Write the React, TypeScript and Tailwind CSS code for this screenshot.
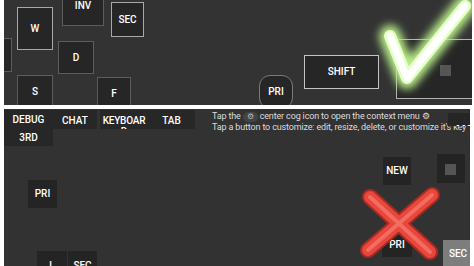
import React from "react";

function Label({ children }: { children: React.ReactNode }) {
  return <span className="text-[10px] font-medium leading-none text-white">{children}</span>;
}

export default function App() {
  return (
    <div className="w-[474px] h-[266px] bg-white flex flex-col gap-[4px] overflow-hidden font-['Roboto','Liberation_Sans',sans-serif]">
      {/* top: edit mode, saved */}
      <div className="relative h-[105px] ml-[4px] mr-[2px] bg-[#333333] overflow-hidden">
        <div className="absolute left-[13px] top-[7px] w-[36px] h-[43px] border border-[#a8a8a8] bg-[#262626] flex items-center justify-center"><Label>W</Label></div>
        <div className="absolute left-[58px] top-[-14px] w-[42px] h-[40px] border border-[#5c5c5c] bg-[#262626] flex items-center justify-center"><Label>INV</Label></div>
        <div className="absolute left-[107px] top-[2px] w-[33px] h-[35px] border border-[#a8a8a8] bg-[#262626] flex items-center justify-center"><Label>SEC</Label></div>
        <div className="absolute left-[-30px] top-[38px] w-[38px] h-[34px] border border-[#5c5c5c] bg-[#262626]" />
        <div className="absolute left-[54px] top-[41px] w-[36px] h-[33px] border border-[#5c5c5c] bg-[#262626] flex items-center justify-center"><Label>D</Label></div>
        <div className="absolute left-[13px] top-[75px] w-[36px] h-[34px] border border-[#5c5c5c] bg-[#262626] flex items-center justify-center"><Label>S</Label></div>
        <div className="absolute left-[93px] top-[77px] w-[34px] h-[34px] border border-[#5c5c5c] bg-[#262626] flex items-center justify-center"><Label>F</Label></div>
        <div className="absolute left-[255px] top-[75px] w-[34px] h-[34px] rounded-[11px] border border-[#7a7a7a] bg-[#262626] flex items-center justify-center"><Label>PRI</Label></div>
        <div className="absolute left-[300px] top-[55px] w-[75px] h-[34px] border border-[#c4c4c4] bg-[#262626] flex items-center justify-center"><Label>SHIFT</Label></div>
        <div className="absolute left-[392px] top-[39px] w-[97px] h-[60px] border border-[#b4b4b4] bg-[#262626]">
          <div className="absolute left-[43px] top-[25px] w-[11px] h-[11px] bg-[#555555]" />
        </div>
        <svg className="absolute left-0 top-0" width="472" height="105" viewBox="0 0 472 105">
          <defs>
            <filter id="glow" x="-30%" y="-30%" width="160%" height="160%">
              <feGaussianBlur stdDeviation="4" />
            </filter>
          </defs>
          <polyline points="386,36 403,78 461,6" fill="none" stroke="#b9ec8a" strokeWidth="22" strokeLinecap="round" strokeLinejoin="round" filter="url(#glow)" />
          <polyline points="386,36 403,78 461,6" fill="none" stroke="#e6ffc8" strokeWidth="12" strokeLinecap="round" strokeLinejoin="round" />
          <polyline points="386,36 403,78 461,6" fill="none" stroke="#ffffff" strokeWidth="7" strokeLinecap="round" strokeLinejoin="round" />
        </svg>
      </div>

      {/* bottom: edit mode, discarded */}
      <div className="relative flex-1 mx-[4px] bg-[#323232] overflow-hidden">
        <div className="flex items-start pt-[1px]">
          <div className="flex flex-col">
            <div className="flex">
              <div className="w-[49px] h-[19px] bg-[#272727] flex justify-center pt-[5px]"><Label>DEBUG</Label></div>
              <div className="w-[44px] h-[19px] bg-[#272727] flex items-center justify-center pt-[3px]"><Label>CHAT</Label></div>
              <div className="ml-[3px] w-[48px] h-[19px] bg-[#272727] overflow-hidden flex justify-center pt-[5px]">
                <span className="w-[48px] text-center text-[10px] font-medium leading-[11px] tracking-[-0.2px] text-white break-all">KEYBOARD</span>
              </div>
              <div className="w-[47px] h-[19px] bg-[#272727] flex items-center justify-center pt-[3px]"><Label>TAB</Label></div>
            </div>
            <div className="w-[49px] h-[17px] bg-[#272727] flex items-center justify-center"><Label>3RD</Label></div>
          </div>
          <div className="relative z-10 ml-auto mt-[3px] w-[22px] h-[13px] bg-[#262626] overflow-hidden pl-[8px] pt-[3px] whitespace-nowrap">
            <span className="text-[11px] font-bold leading-none text-white">MOUSE</span>
          </div>
        </div>

        <div className="absolute left-[208px] top-[2px] whitespace-nowrap text-[9px] leading-[11px] tracking-[-0.15px] text-[#dcdcdc]">
          <div className="flex items-center">
            <span>Tap the</span>
            <span className="mx-[2px] w-[15px] h-[10px] rounded-full bg-[#444444] text-[8px] leading-[10px] text-center text-[#bbbbbb]">⚙</span>
            <span>center cog icon to open the context menu ⚙</span>
          </div>
          <div>Tap a button to customize: edit, resize, delete, or customize it's key</div>
        </div>

        <div className="absolute left-[24px] top-[71px] w-[29px] h-[28px] bg-[#242424] flex items-center justify-center"><Label>PRI</Label></div>
        <div className="absolute left-[379px] top-[48px] w-[28px] h-[28px] bg-[#242424] flex items-center justify-center"><Label>NEW</Label></div>
        <div className="absolute left-[433px] top-[45px] w-[28px] h-[29px] bg-[#242424]">
          <div className="absolute left-[8px] top-[10px] w-[11px] h-[11px] bg-[#555555]" />
        </div>
        <div className="absolute left-[378px] top-[124px] w-[30px] h-[24px] bg-[#242424] flex items-center justify-center"><Label>PRI</Label></div>
        <div className="absolute left-[33px] top-[142px] w-[30px] h-[30px] bg-[#242424] flex items-center justify-center"><Label>L</Label></div>
        <div className="absolute left-[64px] top-[142px] w-[29px] h-[30px] bg-[#242424] flex items-center justify-center"><Label>SEC</Label></div>
        <div className="absolute left-[439px] top-[131px] w-[30px] h-[28px] bg-[#7d7d7d] flex items-center justify-center"><Label>SEC</Label></div>

        <svg className="absolute left-0 top-0" width="466" height="157" viewBox="0 0 466 157">
          <g strokeLinecap="round">
            <line x1="366" y1="88" x2="426" y2="143" stroke="#a92a22" strokeWidth="16" />
            <line x1="428" y1="86" x2="364" y2="141" stroke="#a92a22" strokeWidth="16" />
            <line x1="366" y1="88" x2="426" y2="143" stroke="#e8473c" strokeWidth="12" />
            <line x1="428" y1="86" x2="364" y2="141" stroke="#e8473c" strokeWidth="12" />
            <line x1="366" y1="88" x2="426" y2="143" stroke="#f26c61" strokeWidth="4" />
            <line x1="428" y1="86" x2="364" y2="141" stroke="#f26c61" strokeWidth="4" />
          </g>
        </svg>
      </div>
    </div>
  );
}
